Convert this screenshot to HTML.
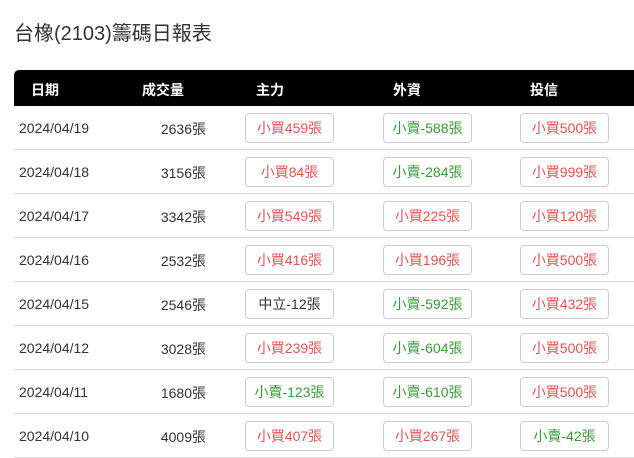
<!DOCTYPE html>
<html><head><meta charset="utf-8"><style>
body{margin:0;width:634px;height:454px;overflow:hidden;background:#fff;font-family:"Liberation Sans","Noto Sans CJK TC",sans-serif;color:#333}
*{box-sizing:border-box}
h1{position:absolute;left:14px;top:17px;margin:0;font-size:20px;font-weight:normal;color:#333}
.hd{position:absolute;left:14px;top:70px;width:640px;height:36px;background:#000;border-radius:5px 0 0 0;color:#fff;font-size:14px;font-weight:bold}
.hd span{position:absolute;top:10px}
.row{position:absolute;left:14px;width:640px;height:44px;border-bottom:1px solid #ddd;font-size:14px}
.d{position:absolute;left:5px;top:14px}
.v{position:absolute;right:448px;top:13px}
.b{position:absolute;top:7px;width:89px;height:30px;border:1px solid #ccc;border-radius:4px;text-align:center;line-height:28px;font-size:14px}
.r{color:#e05555}.g{color:#3c9a3c}.k{color:#333}
</style></head><body>
<h1>台橡(2103)籌碼日報表</h1>
<div class="hd"><span style="left:17px">日期</span><span style="left:128px">成交量</span><span style="left:242px">主力</span><span style="left:379px">外資</span><span style="left:516px">投信</span></div>
<div class="row" style="top:106px"><span class="d">2024/04/19</span><span class="v">2636張</span><div class="b r" style="left:231px">小買459張</div><div class="b g" style="left:369px">小賣-588張</div><div class="b r" style="left:506px">小買500張</div></div>
<div class="row" style="top:150px"><span class="d">2024/04/18</span><span class="v">3156張</span><div class="b r" style="left:231px">小買84張</div><div class="b g" style="left:369px">小賣-284張</div><div class="b r" style="left:506px">小買999張</div></div>
<div class="row" style="top:194px"><span class="d">2024/04/17</span><span class="v">3342張</span><div class="b r" style="left:231px">小買549張</div><div class="b r" style="left:369px">小買225張</div><div class="b r" style="left:506px">小買120張</div></div>
<div class="row" style="top:238px"><span class="d">2024/04/16</span><span class="v">2532張</span><div class="b r" style="left:231px">小買416張</div><div class="b r" style="left:369px">小買196張</div><div class="b r" style="left:506px">小買500張</div></div>
<div class="row" style="top:282px"><span class="d">2024/04/15</span><span class="v">2546張</span><div class="b k" style="left:231px">中立-12張</div><div class="b g" style="left:369px">小賣-592張</div><div class="b r" style="left:506px">小買432張</div></div>
<div class="row" style="top:326px"><span class="d">2024/04/12</span><span class="v">3028張</span><div class="b r" style="left:231px">小買239張</div><div class="b g" style="left:369px">小賣-604張</div><div class="b r" style="left:506px">小買500張</div></div>
<div class="row" style="top:370px"><span class="d">2024/04/11</span><span class="v">1680張</span><div class="b g" style="left:231px">小賣-123張</div><div class="b g" style="left:369px">小賣-610張</div><div class="b r" style="left:506px">小買500張</div></div>
<div class="row" style="top:414px"><span class="d">2024/04/10</span><span class="v">4009張</span><div class="b r" style="left:231px">小買407張</div><div class="b r" style="left:369px">小買267張</div><div class="b g" style="left:506px">小賣-42張</div></div>
</body></html>
